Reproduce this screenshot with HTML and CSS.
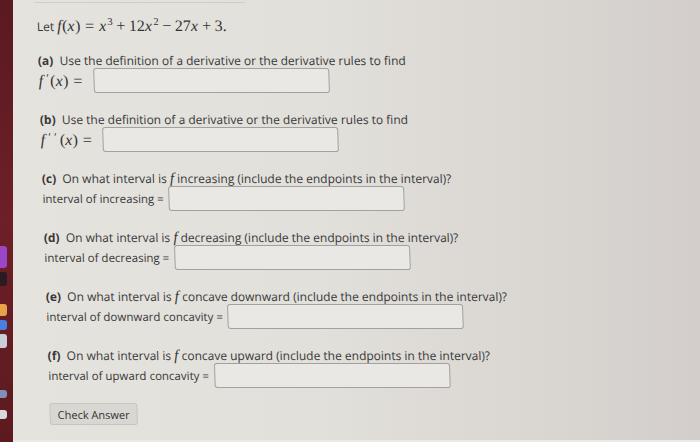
FILE: index.html
```html
<!DOCTYPE html>
<html>
<head>
<meta charset="utf-8">
<link rel="stylesheet" href="styles.css">
</head>
<body>
<div class="screen">
  <div class="dock">
    <span class="ico ico-purple"></span>
    <span class="ico ico-dark"></span>
    <span class="ico ico-orange"></span>
    <span class="ico ico-blue"></span>
    <span class="ico ico-gray"></span>
    <span class="ico ico-small"></span>
    <span class="ico ico-white"></span>
  </div>
  <div class="page">
    <div class="topline"></div>
    <div class="content">
      <p class="intro">Let <span class="m"><i>f</i>(<i>x</i>)<span class="rel">=</span><i>x</i><sup>3</sup><span class="op">+</span>12<i>x</i><sup>2</sup><span class="op">−</span>27<i>x</i><span class="op">+</span>3.</span></p>

      <div class="q">
        <div class="qtext"><b>(a)</b>&nbsp; Use the definition of a derivative or the derivative rules to find</div>
        <div class="ans"><span class="m lbl"><i>f</i><span class="pr">′</span>(<i>x</i>)<span class="rel">=</span></span><span class="box"></span></div>
      </div>

      <div class="q">
        <div class="qtext"><b>(b)</b>&nbsp; Use the definition of a derivative or the derivative rules to find</div>
        <div class="ans"><span class="m lbl"><i>f</i><span class="pr pr2">′′</span>(<i>x</i>)<span class="rel">=</span></span><span class="box"></span></div>
      </div>

      <div class="q">
        <div class="qtext"><b>(c)</b>&nbsp; On what interval is <i class="mf">f</i> increasing (include the endpoints in the interval)?</div>
        <div class="ans"><span class="lbl">interval of increasing =</span><span class="box"></span></div>
      </div>

      <div class="q">
        <div class="qtext"><b>(d)</b>&nbsp; On what interval is <i class="mf">f</i> decreasing (include the endpoints in the interval)?</div>
        <div class="ans"><span class="lbl">interval of decreasing =</span><span class="box"></span></div>
      </div>

      <div class="q">
        <div class="qtext"><b>(e)</b>&nbsp; On what interval is <i class="mf">f</i> concave downward (include the endpoints in the interval)?</div>
        <div class="ans"><span class="lbl">interval of downward concavity =</span><span class="box"></span></div>
      </div>

      <div class="q">
        <div class="qtext"><b>(f)</b>&nbsp; On what interval is <i class="mf">f</i> concave upward (include the endpoints in the interval)?</div>
        <div class="ans"><span class="lbl">interval of upward concavity =</span><span class="box"></span></div>
      </div>

      <button class="check">Check Answer</button>
    </div>
  </div>
</div>
</body>
</html>
```

FILE: styles.css
```css
html, body {
  margin: 0;
  padding: 0;
  width: 700px;
  height: 442px;
  overflow: hidden;
}

.screen {
  display: flex;
  width: 700px;
  height: 442px;
  background: linear-gradient(90deg, #e5e3de 0%, #e2e0db 45%, #d9d5d1 80%, #d3cecb 100%);
  font-family: "Open Sans", "Liberation Sans", sans-serif;
  color: #383838;
}

.dock {
  width: 13px;
  flex: none;
  background: linear-gradient(180deg, #5a1a20 0%, #6e1f27 50%, #5c1a1f 100%);
  display: flex;
  flex-direction: column;
  align-items: flex-start;
  padding-top: 246px;
  box-sizing: border-box;
  gap: 4px;
}

.ico {
  display: block;
  width: 7px;
  height: 12px;
  border-radius: 0 3px 3px 0;
}
.ico-purple { background: #9b46c8; height: 22px; }
.ico-dark { background: #2a1a22; height: 14px; }
.ico-orange { background: #e8a24a; height: 12px; margin-top: 14px; }
.ico-blue { background: #4a7ee0; height: 10px; }
.ico-gray { background: #c9cdd6; height: 14px; }
.ico-small { background: #7f8fb5; height: 8px; margin-top: 38px; }
.ico-white { background: #d8d8dc; height: 9px; margin-top: 8px; }

.page {
  flex: 1;
  display: flex;
  flex-direction: column;
  border-bottom: 2px solid #ebe9e6;
  box-sizing: border-box;
}

.topline {
  height: 1px;
  width: 210px;
  margin: 2px 0 0 22px;
  background: #cfcdc8;
}

.content {
  padding: 0 0 0 23px;
  transform: skewX(1.9deg);
  transform-origin: 0 0;
  display: flex;
  flex-direction: column;
  align-items: flex-start;
}

.intro {
  margin: 17px 0 0 0;
  height: 14px;
  font-size: 12px;
  line-height: 14px;
  white-space: nowrap;
}

.m {
  font-family: "Liberation Serif", "DejaVu Serif", serif;
  font-size: 16px;
  line-height: 0;
  color: #333;
}
.m i {
  padding-right: 0.5px;
}
.m sup {
  font-size: 10.5px;
  line-height: 0;
  vertical-align: 6px;
  padding-left: 1px;
}
.rel {
  margin: 0 0.3em;
}
.op {
  margin: 0 0.22em;
}
.pr {
  font-size: 12px;
  vertical-align: 4px;
  line-height: 0;
  margin: 0 0 0 3px;
  letter-spacing: 1px;
}
.pr2 {
  letter-spacing: 3px;
}
.mf {
  font-family: "Liberation Serif", serif;
  font-size: 15px;
  line-height: 0;
}

.q {
  margin-top: 20px;
  display: flex;
  flex-direction: column;
  align-items: flex-start;
}

.qtext {
  font-size: 12px;
  line-height: 14px;
  height: 14px;
  white-space: nowrap;
}
.qtext b {
  font-weight: 700;
}

.ans {
  display: flex;
  align-items: center;
  gap: 5px;
  height: 25px;
}
.lbl {
  font-size: 11.5px;
  white-space: nowrap;
}
.ans .m.lbl {
  font-size: 16px;
  line-height: 25px;
}
.ans .m.lbl .rel {
  margin-right: 6px;
}

.box {
  display: block;
  width: 234px;
  height: 23px;
  border: 1px solid #a3a19e;
  border-radius: 3px;
  background: #eae8e4;
}

.check {
  margin-top: 15px;
  width: 88px;
  height: 22px;
  padding: 0;
  font-family: "Open Sans", "Liberation Sans", sans-serif;
  font-size: 11px;
  color: #333;
  background: #d9d7d2;
  border: 1px solid #c7c5c0;
  border-radius: 3px;
}
```
